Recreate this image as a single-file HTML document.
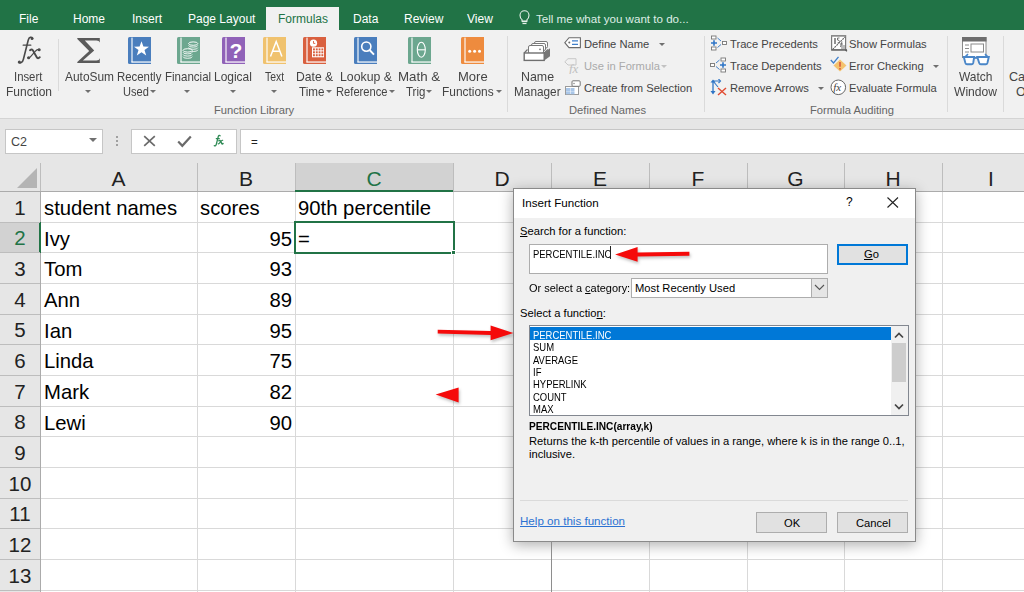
<!DOCTYPE html><html><head><meta charset="utf-8"><style>
*{margin:0;padding:0;box-sizing:border-box}
html,body{width:1024px;height:592px;overflow:hidden;background:#fff;font-family:"Liberation Sans",sans-serif}
div,span{position:absolute;white-space:nowrap}
.tab{top:11px;color:#fff;font-size:12px;line-height:16px}
.rl{color:#444;font-size:11.8px;line-height:15px;text-align:center}
.gl{color:#666;font-size:11.2px;line-height:14px}
.sl{color:#444;font-size:11.2px;line-height:14px}
.sep{width:1px;background:#dadada}
.ch{top:163px;height:28px;color:#222;font-size:21px;line-height:31px;text-align:center}
.vl{width:1px;background:#d9d9d9}
.hl{height:1px;background:#d9d9d9}
.rh{left:0;width:40px;color:#222;font-size:20.5px;text-align:center}
.cell{color:#000;font-size:20.3px;line-height:30px}
.dt{color:#000;font-size:11.2px;line-height:13px}
.li{left:533px;color:#000;font-size:11px;line-height:12px;transform-origin:0 0;transform:scaleX(0.86)}
</style></head><body>
<div style="left:0;top:0;width:1024px;height:30px;background:#217346"></div>
<div style="left:266px;top:7px;width:73px;height:23px;background:#f1f1f1"></div>
<div class="tab" style="left:19px">File</div>
<div class="tab" style="left:73px">Home</div>
<div class="tab" style="left:132px">Insert</div>
<div class="tab" style="left:188px">Page Layout</div>
<div class="tab" style="left:353px">Data</div>
<div class="tab" style="left:404px">Review</div>
<div class="tab" style="left:467px">View</div>
<div class="tab" style="left:278px;color:#217346">Formulas</div>
<div class="tab" style="left:536px;color:#dfeee5;font-size:11.6px">Tell me what you want to do...</div>
<div style="left:0;top:30px;width:1024px;height:89px;background:#f1f1f1;border-bottom:1px solid #d4d4d4"></div>
<div style="left:0;top:119px;width:1024px;height:73px;background:#e6e6e6"></div>
<div class="rl" style="left:13.84px;top:70px;font-size:12.6px;transform-origin:0 0;transform:scaleX(0.900)">Insert</div>
<div class="rl" style="left:64.50px;top:70px;font-size:12.6px;transform-origin:0 0;transform:scaleX(0.946)">AutoSum</div>
<div class="rl" style="left:116.53px;top:70px;font-size:12.6px;transform-origin:0 0;transform:scaleX(0.905)">Recently</div>
<div class="rl" style="left:164.52px;top:70px;font-size:12.6px;transform-origin:0 0;transform:scaleX(0.916)">Financial</div>
<div class="rl" style="left:214.49px;top:70px;font-size:12.6px;transform-origin:0 0;transform:scaleX(0.950)">Logical</div>
<div class="rl" style="left:265.00px;top:70px;font-size:12.6px;transform-origin:0 0;transform:scaleX(0.825)">Text</div>
<div class="rl" style="left:295.97px;top:70px;font-size:12.6px;transform-origin:0 0;transform:scaleX(0.964)">Date &amp;</div>
<div class="rl" style="left:339.96px;top:70px;font-size:12.6px;transform-origin:0 0;transform:scaleX(0.976)">Lookup &amp;</div>
<div class="rl" style="left:397.87px;top:70px;font-size:12.6px;transform-origin:0 0;transform:scaleX(1.057)">Math &amp;</div>
<div class="rl" style="left:457.90px;top:70px;font-size:12.6px;transform-origin:0 0;transform:scaleX(1.034)">More</div>
<div class="rl" style="left:521.45px;top:70px;font-size:12.6px;transform-origin:0 0;transform:scaleX(0.985)">Name</div>
<div class="rl" style="left:958.50px;top:70px;font-size:12.6px;transform-origin:0 0;transform:scaleX(0.951)">Watch</div>
<div class="rl" style="left:5.68px;top:85px;font-size:12.6px;transform-origin:0 0;transform:scaleX(0.952)">Function</div>
<div class="rl" style="left:122.86px;top:85px;font-size:12.6px;transform-origin:0 0;transform:scaleX(0.877)">Used</div>
<div class="rl" style="left:299.25px;top:85px;font-size:12.6px;transform-origin:0 0;transform:scaleX(0.927)">Time</div>
<div class="rl" style="left:336.30px;top:85px;font-size:12.6px;transform-origin:0 0;transform:scaleX(0.887)">Reference</div>
<div class="rl" style="left:406.00px;top:85px;font-size:12.6px;transform-origin:0 0;transform:scaleX(0.910)">Trig</div>
<div class="rl" style="left:442.49px;top:85px;font-size:12.6px;transform-origin:0 0;transform:scaleX(0.946)">Functions</div>
<div class="rl" style="left:513.50px;top:85px;font-size:12.6px;transform-origin:0 0;transform:scaleX(0.937)">Manager</div>
<div class="rl" style="left:954.00px;top:85px;font-size:12.6px;transform-origin:0 0;transform:scaleX(0.959)">Window</div>
<div class="rl" style="left:1009px;top:70px;font-size:12.6px">Ca</div><div class="rl" style="left:1016px;top:85px;font-size:12.6px">O</div>
<div class="gl" style="left:214px;top:103px">Function Library</div>
<div class="gl" style="left:569px;top:103px">Defined Names</div>
<div class="gl" style="left:810px;top:103px">Formula Auditing</div>
<div class="sl" style="left:584px;top:37px;color:#444">Define Name</div>
<div class="sl" style="left:584px;top:59px;color:#aaa">Use in Formula</div>
<div class="sl" style="left:584px;top:81px;color:#444">Create from Selection</div>
<div class="sl" style="left:730px;top:37px;color:#444">Trace Precedents</div>
<div class="sl" style="left:730px;top:59px;color:#444">Trace Dependents</div>
<div class="sl" style="left:730px;top:81px;color:#444">Remove Arrows</div>
<div class="sl" style="left:849px;top:37px;color:#444">Show Formulas</div>
<div class="sl" style="left:849px;top:59px;color:#444">Error Checking</div>
<div class="sl" style="left:849px;top:81px;color:#444">Evaluate Formula</div>
<div class="sep" style="left:58px;top:39px;height:52px"></div>
<div class="sep" style="left:507px;top:36px;height:76px"></div>
<div class="sep" style="left:704px;top:36px;height:76px"></div>
<div class="sep" style="left:947px;top:36px;height:76px"></div>
<div class="sep" style="left:1003px;top:36px;height:76px"></div>
<svg style="position:absolute;left:128px;top:37px" width="23" height="27" viewBox="0 0 23 27"><path d="M1.6,0 H23 V27 H1.6 Q0,27 0,25.4 V1.6 Q0,0 1.6,0 Z" fill="#4a7ebd"/><rect x="3.4" y="0.6" width="1.2" height="24.6" fill="#fff" opacity="0.92"/><rect x="3.4" y="24.4" width="19.6" height="1.3" fill="#fff" opacity="0.92"/><path d="M13.5,4.2 L15.4,9.6 L21,9.7 L16.5,13.1 L18.2,18.6 L13.5,15.3 L8.8,18.6 L10.5,13.1 L6,9.7 L11.6,9.6 Z" fill="#fff"/></svg>
<svg style="position:absolute;left:177px;top:37px" width="23" height="27" viewBox="0 0 23 27"><path d="M1.6,0 H23 V27 H1.6 Q0,27 0,25.4 V1.6 Q0,0 1.6,0 Z" fill="#6ca78f"/><rect x="3.4" y="0.6" width="1.2" height="24.6" fill="#fff" opacity="0.92"/><rect x="3.4" y="24.4" width="19.6" height="1.3" fill="#fff" opacity="0.92"/><path d="M11.6,8.4 a4.6,1.7 0 0 0 9.2,0" fill="none" stroke="#fff" stroke-width="0.95" opacity="0.9"/><path d="M11.6,10.6 a4.6,1.7 0 0 0 9.2,0" fill="none" stroke="#fff" stroke-width="0.95" opacity="0.9"/><path d="M11.6,12.8 a4.6,1.7 0 0 0 9.2,0" fill="none" stroke="#fff" stroke-width="0.95" opacity="0.9"/><path d="M6.0,15.2 a4.6,1.7 0 0 0 9.2,0" fill="none" stroke="#fff" stroke-width="0.95" opacity="0.9"/><path d="M6.0,17.4 a4.6,1.7 0 0 0 9.2,0" fill="none" stroke="#fff" stroke-width="0.95" opacity="0.9"/><path d="M6.0,19.6 a4.6,1.7 0 0 0 9.2,0" fill="none" stroke="#fff" stroke-width="0.95" opacity="0.9"/><ellipse cx="16.2" cy="6.6" rx="4.6" ry="1.7" fill="none" stroke="#fff" stroke-width="0.95"/><ellipse cx="10.6" cy="13.4" rx="4.6" ry="1.7" fill="#6ca78f" stroke="#fff" stroke-width="0.95"/></svg>
<svg style="position:absolute;left:222px;top:37px" width="23" height="27" viewBox="0 0 23 27"><path d="M1.6,0 H23 V27 H1.6 Q0,27 0,25.4 V1.6 Q0,0 1.6,0 Z" fill="#9062b8"/><rect x="3.4" y="0.6" width="1.2" height="24.6" fill="#fff" opacity="0.92"/><rect x="3.4" y="24.4" width="19.6" height="1.3" fill="#fff" opacity="0.92"/><text x="13.8" y="21" font-family="Liberation Sans" font-weight="bold" font-size="21" fill="#fff" text-anchor="middle">?</text></svg>
<svg style="position:absolute;left:263px;top:37px" width="23" height="27" viewBox="0 0 23 27"><path d="M1.6,0 H23 V27 H1.6 Q0,27 0,25.4 V1.6 Q0,0 1.6,0 Z" fill="#f0c26e"/><rect x="3.4" y="0.6" width="1.2" height="24.6" fill="#fff" opacity="0.92"/><rect x="3.4" y="24.4" width="19.6" height="1.3" fill="#fff" opacity="0.92"/><path d="M7.5,19.5 L13.2,4.5 L18.9,19.5 M9.6,14.2 H16.8" fill="none" stroke="#fff" stroke-width="1.5"/></svg>
<svg style="position:absolute;left:303px;top:37px" width="23" height="27" viewBox="0 0 23 27"><path d="M1.6,0 H23 V27 H1.6 Q0,27 0,25.4 V1.6 Q0,0 1.6,0 Z" fill="#d9603f"/><rect x="3.4" y="0.6" width="1.2" height="24.6" fill="#fff" opacity="0.92"/><rect x="3.4" y="24.4" width="19.6" height="1.3" fill="#fff" opacity="0.92"/><circle cx="10.5" cy="6.2" r="3.6" fill="#fff"/><path d="M10.5,4 V6.4 H12.3" stroke="#d9603f" stroke-width="0.9" fill="none"/><rect x="9" y="10.3" width="12" height="10" fill="#fff"/><rect x="10.0" y="11.4" width="1.9" height="2" fill="#d9603f"/><rect x="10.0" y="14.3" width="1.9" height="2" fill="#d9603f"/><rect x="10.0" y="17.2" width="1.9" height="2" fill="#d9603f"/><rect x="12.8" y="11.4" width="1.9" height="2" fill="#d9603f"/><rect x="12.8" y="14.3" width="1.9" height="2" fill="#d9603f"/><rect x="12.8" y="17.2" width="1.9" height="2" fill="#d9603f"/><rect x="15.6" y="11.4" width="1.9" height="2" fill="#d9603f"/><rect x="15.6" y="14.3" width="1.9" height="2" fill="#d9603f"/><rect x="15.6" y="17.2" width="1.9" height="2" fill="#d9603f"/><rect x="18.4" y="11.4" width="1.9" height="2" fill="#d9603f"/><rect x="18.4" y="14.3" width="1.9" height="2" fill="#d9603f"/><rect x="18.4" y="17.2" width="1.9" height="2" fill="#d9603f"/></svg>
<svg style="position:absolute;left:354px;top:37px" width="23" height="27" viewBox="0 0 23 27"><path d="M1.6,0 H23 V27 H1.6 Q0,27 0,25.4 V1.6 Q0,0 1.6,0 Z" fill="#4a7ebd"/><rect x="3.4" y="0.6" width="1.2" height="24.6" fill="#fff" opacity="0.92"/><rect x="3.4" y="24.4" width="19.6" height="1.3" fill="#fff" opacity="0.92"/><circle cx="12.3" cy="9.6" r="4.6" fill="none" stroke="#fff" stroke-width="1.6"/><path d="M15.6,13 L20,17.6" stroke="#fff" stroke-width="1.9"/></svg>
<svg style="position:absolute;left:408px;top:37px" width="23" height="27" viewBox="0 0 23 27"><path d="M1.6,0 H23 V27 H1.6 Q0,27 0,25.4 V1.6 Q0,0 1.6,0 Z" fill="#6ca78f"/><rect x="3.4" y="0.6" width="1.2" height="24.6" fill="#fff" opacity="0.92"/><rect x="3.4" y="24.4" width="19.6" height="1.3" fill="#fff" opacity="0.92"/><ellipse cx="13.3" cy="12.8" rx="4" ry="7.5" fill="none" stroke="#fff" stroke-width="1.1"/><path d="M9.4,12.8 H17.2" stroke="#fff" stroke-width="1.1"/></svg>
<svg style="position:absolute;left:461px;top:37px" width="23" height="27" viewBox="0 0 23 27"><path d="M1.6,0 H23 V27 H1.6 Q0,27 0,25.4 V1.6 Q0,0 1.6,0 Z" fill="#ee8b3e"/><rect x="3.4" y="0.6" width="1.2" height="24.6" fill="#fff" opacity="0.92"/><rect x="3.4" y="24.4" width="19.6" height="1.3" fill="#fff" opacity="0.92"/><circle cx="8.7" cy="14.2" r="1.5" fill="#fff"/><circle cx="13.6" cy="14.2" r="1.5" fill="#fff"/><circle cx="18.5" cy="14.2" r="1.5" fill="#fff"/></svg>
<svg style="position:absolute;left:15px;top:34px" width="30" height="34" viewBox="0 0 30 34"><g stroke="#4a4a4a" fill="none" stroke-linecap="round"><path d="M17.8,4.4 C16.5,2.6 14.2,2.8 13.2,6.2 L8.4,25.2 C7.6,28.3 5.6,29.6 3.6,28.3" stroke-width="1.6"/><path d="M8.2,11.2 H15.8" stroke-width="1.3"/><path d="M15,16.2 C16.8,14.8 17.8,15.6 18.6,17.6 L21.6,23 C22.4,24.6 23.6,24.6 24.8,23.2" stroke-width="1.9"/><path d="M24,15.4 C22.6,15 21.6,15.8 20.2,17.4 L15.6,22.6 C14.6,23.8 13.6,24.2 12.9,23.8" stroke-width="1.2"/></g><g fill="#4a4a4a"><circle cx="17" cy="4.7" r="1.4"/><circle cx="4.4" cy="27.9" r="1.5"/><circle cx="24.2" cy="15.8" r="1.5"/><circle cx="13.6" cy="23.7" r="1.5"/></g></svg>
<svg style="position:absolute;left:77px;top:38px" width="23" height="26" viewBox="0 0 23 26"><path d="M0.3,0 H22.8 V4.6 Q22.2,2.5 19.5,2.5 H7.8 L17.2,12.6 L5.9,22.5 H19.5 Q22.2,22.5 22.8,20.2 V25 H0.3 V24.1 L12.2,12.9 L0.3,0.9 Z" fill="#5a5a5a"/></svg>
<svg style="position:absolute;left:519px;top:10px" width="11" height="15" viewBox="0 0 11 15"><path d="M3,11.2 V9.6 Q1,8 1,5.2 A4.5,4.5 0 0 1 10,5.2 Q10,8 8,9.6 V11.2 Z" fill="none" stroke="#e6f0ea" stroke-width="1.1"/><rect x="3" y="10.6" width="5" height="1.6" fill="#e6f0ea"/><rect x="3.5" y="13" width="4" height="1.1" fill="#e6f0ea"/></svg>
<div style="left:85.0px;top:89.5px;width:0;height:0;border-left:3.0px solid transparent;border-right:3.0px solid transparent;border-top:3.0px solid #6f6f6f"></div>
<div style="left:150.0px;top:89.5px;width:0;height:0;border-left:3.0px solid transparent;border-right:3.0px solid transparent;border-top:3.0px solid #6f6f6f"></div>
<div style="left:184.0px;top:89.5px;width:0;height:0;border-left:3.0px solid transparent;border-right:3.0px solid transparent;border-top:3.0px solid #6f6f6f"></div>
<div style="left:230.0px;top:89.5px;width:0;height:0;border-left:3.0px solid transparent;border-right:3.0px solid transparent;border-top:3.0px solid #6f6f6f"></div>
<div style="left:271.0px;top:89.5px;width:0;height:0;border-left:3.0px solid transparent;border-right:3.0px solid transparent;border-top:3.0px solid #6f6f6f"></div>
<div style="left:325.5px;top:89.5px;width:0;height:0;border-left:3.0px solid transparent;border-right:3.0px solid transparent;border-top:3.0px solid #6f6f6f"></div>
<div style="left:388.8px;top:89.5px;width:0;height:0;border-left:3.0px solid transparent;border-right:3.0px solid transparent;border-top:3.0px solid #6f6f6f"></div>
<div style="left:426.3px;top:89.5px;width:0;height:0;border-left:3.0px solid transparent;border-right:3.0px solid transparent;border-top:3.0px solid #6f6f6f"></div>
<div style="left:495.5px;top:89.5px;width:0;height:0;border-left:3.0px solid transparent;border-right:3.0px solid transparent;border-top:3.0px solid #6f6f6f"></div>
<div style="left:658.5px;top:42.5px;width:0;height:0;border-left:3.0px solid transparent;border-right:3.0px solid transparent;border-top:3.0px solid #6f6f6f"></div>
<div style="left:661.0px;top:64.5px;width:0;height:0;border-left:3.0px solid transparent;border-right:3.0px solid transparent;border-top:3.0px solid #c2c2c2"></div>
<div style="left:817.5px;top:86.5px;width:0;height:0;border-left:3.0px solid transparent;border-right:3.0px solid transparent;border-top:3.0px solid #6f6f6f"></div>
<div style="left:933.0px;top:64.5px;width:0;height:0;border-left:3.0px solid transparent;border-right:3.0px solid transparent;border-top:3.0px solid #6f6f6f"></div>
<svg style="position:absolute;left:523px;top:40px" width="29" height="23" viewBox="0 0 29 23"><rect x="11.5" y="1.5" width="13" height="6.5" rx="1.5" fill="#fff" stroke="#7a7a7a" stroke-width="1"/><rect x="8.5" y="3.5" width="14" height="7" rx="1.5" fill="#fff" stroke="#7a7a7a" stroke-width="1"/><rect x="5.5" y="5.5" width="15" height="8" rx="1.5" fill="#fff" stroke="#7a7a7a" stroke-width="1"/><circle cx="17" cy="9.3" r="0.9" fill="#7a7a7a"/><path d="M1.2,13 L4.5,9.5 M21.2,13 L25,9.5" fill="none" stroke="#6f6f6f" stroke-width="1.1"/><path d="M21.2,13 L27,8.2 V16.3 L21.2,20.6 Z" fill="#767676"/><rect x="1.2" y="13" width="20" height="7.4" fill="#fff" stroke="#6f6f6f" stroke-width="1.4"/></svg>
<svg style="position:absolute;left:564px;top:37px" width="18" height="12" viewBox="0 0 18 12"><path d="M5,0.7 H16.4 V10.6 H5 L0.8,5.65 Z" fill="#fff" stroke="#6b6b6b" stroke-width="1.1"/><circle cx="5.3" cy="5.6" r="1" fill="#6b6b6b"/><path d="M8,3.8 H14 M8,7.4 H14" stroke="#3f7fca" stroke-width="1.2"/></svg>
<svg style="position:absolute;left:564px;top:58px" width="18" height="16" viewBox="0 0 18 16"><path d="M4,0.7 H12 V7 H4 L0.8,3.8 Z" fill="none" stroke="#c8c8c8" stroke-width="1"/><text x="5" y="14.5" font-family="Liberation Serif" font-style="italic" font-size="13" fill="#c0c0c0">fx</text></svg>
<svg style="position:absolute;left:565px;top:80px" width="16" height="15" viewBox="0 0 16 15"><rect x="0.5" y="6.5" width="13" height="8" fill="#fff" stroke="#9a9a9a" stroke-width="1"/><rect x="1" y="8" width="4" height="3" fill="#a9c6e8"/><rect x="5.5" y="8" width="4" height="3" fill="#a9c6e8"/><rect x="1" y="11.3" width="4" height="3" fill="#a9c6e8"/><rect x="5.5" y="11.3" width="4" height="3" fill="#a9c6e8"/><rect x="7" y="0.8" width="8.2" height="5.5" rx="1" fill="#fff" stroke="#777" stroke-width="1"/><circle cx="9" cy="3.5" r="0.7" fill="#777"/></svg>
<svg style="position:absolute;left:710px;top:35px" width="18" height="16" viewBox="0 0 18 16"><rect x="1.5" y="1" width="4.5" height="3" fill="#fff" stroke="#777" stroke-width="0.9"/><rect x="1.5" y="12" width="4.5" height="3" fill="#fff" stroke="#777" stroke-width="0.9"/><rect x="12.5" y="6.5" width="4" height="3" fill="#fff" stroke="#777" stroke-width="0.9"/><path d="M1,8 H7 M4,5.3 V10.7" stroke="#2f75c6" stroke-width="1.6"/><path d="M7.5,3 L11,6 M7.5,12.5 L11,9.5" stroke="#2f75c6" stroke-width="0.9"/></svg>
<svg style="position:absolute;left:710px;top:57px" width="18" height="16" viewBox="0 0 18 16"><rect x="0.5" y="6.5" width="4" height="3" fill="#fff" stroke="#777" stroke-width="0.9"/><rect x="11" y="1" width="4.5" height="3" fill="#fff" stroke="#777" stroke-width="0.9"/><rect x="11" y="12" width="4.5" height="3" fill="#fff" stroke="#777" stroke-width="0.9"/><path d="M10,8 H16 M13,5.3 V10.7" stroke="#2f75c6" stroke-width="1.6"/><path d="M6,6 L9.5,3 M6,9.5 L9.5,12.5" stroke="#2f75c6" stroke-width="0.9"/></svg>
<svg style="position:absolute;left:710px;top:79px" width="18" height="17" viewBox="0 0 18 17"><path d="M3,2 V14" stroke="#2f75c6" stroke-width="1.3"/><path d="M0.5,12 L3,15.5 L5.5,12 Z M0.5,3.5 L3,0.5 L5.5,3.5 Z" fill="#2f75c6"/><path d="M3,2 H9.5 M3,2 L8,8" stroke="#2f75c6" stroke-width="1.1"/><path d="M8.5,0 L10.5,2 L8.5,4" fill="none" stroke="#2f75c6" stroke-width="1.1"/><path d="M8,9 L16,16 M16,9 L8,16" stroke="#e04a30" stroke-width="1.4"/></svg>
<svg style="position:absolute;left:830px;top:34px" width="18" height="18" viewBox="0 0 18 18"><rect x="1.6" y="1.6" width="14" height="14.4" fill="#fff" stroke="#7a7a7a" stroke-width="1.2"/><rect x="1" y="1" width="15" height="1.6" fill="#8a8a8a"/><path d="M2.5,15.6 L15,3" stroke="#666" stroke-width="1.1" stroke-dasharray="2,0.8"/><path d="M5,4 V10" stroke="#555" stroke-width="1.3"/><path d="M9.5,4 H7.5 V6 Q9.5,6 9.5,7.5 Q9.5,9 7.5,9" fill="none" stroke="#666" stroke-width="0.9"/><path d="M12,7.5 L10.5,13 M10,10 H13 M11,14 H15 M11,12 H15" stroke="#666" stroke-width="0.9"/><rect x="1.5" y="15.2" width="15.5" height="1.3" fill="#666"/><path d="M15.5,16 L17,17.3" stroke="#555" stroke-width="1.2"/></svg>
<svg style="position:absolute;left:830px;top:56px" width="18" height="16" viewBox="0 0 18 16"><path d="M0.8,4 L3.5,7 L8.5,0.8" fill="none" stroke="#3f7fca" stroke-width="1.3"/><path d="M10,3.5 L16.5,9.5 L10,15.5 L3.5,9.5 Z" fill="#f4c36f"/><path d="M10,6 V10.8" stroke="#d9503a" stroke-width="1.5"/><circle cx="10" cy="12.8" r="0.9" fill="#d9503a"/></svg>
<svg style="position:absolute;left:830px;top:79px" width="17" height="17" viewBox="0 0 17 17"><circle cx="8.3" cy="8.3" r="7.3" fill="#fff" stroke="#666" stroke-width="1"/><text x="3.2" y="12.3" font-family="Liberation Serif" font-style="italic" font-size="11" fill="#444">fx</text></svg>
<svg style="position:absolute;left:961px;top:37px" width="31" height="29" viewBox="0 0 31 29"><rect x="1.5" y="0.5" width="23.5" height="20" fill="#fff" stroke="#8a8a8a" stroke-width="1"/><rect x="1" y="0" width="24.5" height="4.5" fill="#6d6d6d"/><path d="M4,8 H8 M4,11.5 H8 M4,15 H8" stroke="#8a8a8a" stroke-width="1"/><rect x="10" y="7" width="12.5" height="8" fill="#fff" stroke="#8a8a8a" stroke-width="1"/><path d="M3.5,20.5 L7,17.2 M27.5,20.5 L24,17.2" stroke="#4a86c8" stroke-width="1.6" fill="none"/><path d="M2.8,20 H13.2 L12.2,26 Q11.8,27.3 10.6,27.3 H6 Q4.8,27.3 4.4,26 Z M16.3,20 H27.8 L26.4,26 Q26,27.3 24.8,27.3 H19.8 Q18.6,27.3 18.2,26 Z" fill="#fff" stroke="#4a86c8" stroke-width="1.9"/><path d="M13,21 H16.5" stroke="#4a86c8" stroke-width="1.6"/></svg>
<div style="left:5px;top:129px;width:98px;height:25px;background:#fff;border:1px solid #c6c6c6"></div>
<div style="left:11px;top:134px;font-size:12.5px;line-height:16px;color:#444">C2</div>
<div style="left:131px;top:129px;width:106px;height:25px;background:#fff;border:1px solid #c6c6c6"></div>
<div style="left:240px;top:129px;width:790px;height:25px;background:#fff;border:1px solid #c6c6c6"></div>
<div style="left:251px;top:136px;font-size:11.5px;color:#222">=</div>
<div style="left:88.8px;top:138.3px;width:0;height:0;border-left:4.0px solid transparent;border-right:4.0px solid transparent;border-top:4.0px solid #707070"></div>
<div style="left:116px;top:136px;width:2px;height:2px;background:#a0a0a0"></div>
<div style="left:116px;top:140px;width:2px;height:2px;background:#a0a0a0"></div>
<div style="left:116px;top:144px;width:2px;height:2px;background:#a0a0a0"></div>
<svg style="position:absolute;left:143px;top:135px" width="13" height="12" viewBox="0 0 13 12"><path d="M1.2,1.2 L11.8,10.8 M11.8,1.2 L1.2,10.8" stroke="#6a6a6a" stroke-width="1.7"/></svg>
<svg style="position:absolute;left:177px;top:135px" width="15" height="13" viewBox="0 0 15 13"><path d="M1.2,6.5 L5.3,10.8 L13.8,1.5" fill="none" stroke="#6a6a6a" stroke-width="2.2"/></svg>
<svg style="position:absolute;left:211px;top:134px" width="16" height="14" viewBox="0 0 30 34"><g stroke="#2f8a55" fill="none" stroke-linecap="round"><path d="M17.8,4.4 C16.5,2.6 14.2,2.8 13.2,6.2 L8.4,25.2 C7.6,28.3 5.6,29.6 3.6,28.3" stroke-width="3.2"/><path d="M8.2,11.2 H15.8" stroke-width="2.6"/><path d="M15,16.2 C16.8,14.8 17.8,15.6 18.6,17.6 L21.6,23 C22.4,24.6 23.6,24.6 24.8,23.2" stroke-width="3.6"/><path d="M24,15.4 C22.6,15 21.6,15.8 20.2,17.4 L15.6,22.6 C14.6,23.8 13.6,24.2 12.9,23.8" stroke-width="2.6"/></g></svg>
<div style="left:295px;top:163px;width:158px;height:28px;background:#d2d2d2"></div>
<div class="ch" style="left:40px;width:157px;color:#222">A</div>
<div style="left:40px;top:163px;width:1px;height:28px;background:#bdbdbd"></div>
<div class="ch" style="left:197px;width:98px;color:#222">B</div>
<div style="left:197px;top:163px;width:1px;height:28px;background:#bdbdbd"></div>
<div class="ch" style="left:295px;width:158px;color:#217346">C</div>
<div style="left:295px;top:163px;width:1px;height:28px;background:#bdbdbd"></div>
<div class="ch" style="left:453px;width:98px;color:#222">D</div>
<div style="left:453px;top:163px;width:1px;height:28px;background:#bdbdbd"></div>
<div class="ch" style="left:551px;width:98px;color:#222">E</div>
<div style="left:551px;top:163px;width:1px;height:28px;background:#bdbdbd"></div>
<div class="ch" style="left:649px;width:98px;color:#222">F</div>
<div style="left:649px;top:163px;width:1px;height:28px;background:#bdbdbd"></div>
<div class="ch" style="left:747px;width:97px;color:#222">G</div>
<div style="left:747px;top:163px;width:1px;height:28px;background:#bdbdbd"></div>
<div class="ch" style="left:844px;width:98px;color:#222">H</div>
<div style="left:844px;top:163px;width:1px;height:28px;background:#bdbdbd"></div>
<div class="ch" style="left:942px;width:98px;color:#222">I</div>
<div style="left:942px;top:163px;width:1px;height:28px;background:#bdbdbd"></div>
<div style="left:0;top:191px;width:1024px;height:1px;background:#ababab"></div>
<div style="left:295px;top:190px;width:158px;height:2px;background:#217346"></div>
<div class="vl" style="left:197px;top:192px;height:400px"></div>
<div class="vl" style="left:295px;top:192px;height:400px"></div>
<div class="vl" style="left:453px;top:192px;height:400px"></div>
<div class="vl" style="left:551px;top:192px;height:400px"></div>
<div class="vl" style="left:649px;top:192px;height:400px"></div>
<div class="vl" style="left:747px;top:192px;height:400px"></div>
<div class="vl" style="left:844px;top:192px;height:400px"></div>
<div class="vl" style="left:942px;top:192px;height:400px"></div>
<div class="hl" style="left:40px;top:222px;width:984px"></div>
<div class="hl" style="left:40px;top:252px;width:984px"></div>
<div class="hl" style="left:40px;top:283px;width:984px"></div>
<div class="hl" style="left:40px;top:314px;width:984px"></div>
<div class="hl" style="left:40px;top:344px;width:984px"></div>
<div class="hl" style="left:40px;top:375px;width:984px"></div>
<div class="hl" style="left:40px;top:406px;width:984px"></div>
<div class="hl" style="left:40px;top:436px;width:984px"></div>
<div class="hl" style="left:40px;top:467px;width:984px"></div>
<div class="hl" style="left:40px;top:498px;width:984px"></div>
<div class="hl" style="left:40px;top:528px;width:984px"></div>
<div class="hl" style="left:40px;top:559px;width:984px"></div>
<div class="hl" style="left:40px;top:590px;width:984px"></div>
<div style="left:0;top:192px;width:41px;height:400px;background:#e6e6e6;border-right:1px solid #ababab"></div>
<div style="left:0;top:223px;width:39px;height:29px;background:#d2d2d2"></div>
<div style="left:39px;top:222px;width:2px;height:31px;background:#217346"></div>
<div class="rh" style="top:192px;height:31px;line-height:31px;color:#222">1</div>
<div style="left:0;top:222px;width:40px;height:1px;background:#bdbdbd"></div>
<div class="rh" style="top:223px;height:30px;line-height:30px;color:#217346">2</div>
<div style="left:0;top:252px;width:40px;height:1px;background:#bdbdbd"></div>
<div class="rh" style="top:253px;height:31px;line-height:31px;color:#222">3</div>
<div style="left:0;top:283px;width:40px;height:1px;background:#bdbdbd"></div>
<div class="rh" style="top:284px;height:31px;line-height:31px;color:#222">4</div>
<div style="left:0;top:314px;width:40px;height:1px;background:#bdbdbd"></div>
<div class="rh" style="top:315px;height:30px;line-height:30px;color:#222">5</div>
<div style="left:0;top:344px;width:40px;height:1px;background:#bdbdbd"></div>
<div class="rh" style="top:345px;height:31px;line-height:31px;color:#222">6</div>
<div style="left:0;top:375px;width:40px;height:1px;background:#bdbdbd"></div>
<div class="rh" style="top:376px;height:31px;line-height:31px;color:#222">7</div>
<div style="left:0;top:406px;width:40px;height:1px;background:#bdbdbd"></div>
<div class="rh" style="top:407px;height:30px;line-height:30px;color:#222">8</div>
<div style="left:0;top:436px;width:40px;height:1px;background:#bdbdbd"></div>
<div class="rh" style="top:437px;height:31px;line-height:31px;color:#222">9</div>
<div style="left:0;top:467px;width:40px;height:1px;background:#bdbdbd"></div>
<div class="rh" style="top:468px;height:31px;line-height:31px;color:#222">10</div>
<div style="left:0;top:498px;width:40px;height:1px;background:#bdbdbd"></div>
<div class="rh" style="top:499px;height:30px;line-height:30px;color:#222">11</div>
<div style="left:0;top:528px;width:40px;height:1px;background:#bdbdbd"></div>
<div class="rh" style="top:529px;height:31px;line-height:31px;color:#222">12</div>
<div style="left:0;top:559px;width:40px;height:1px;background:#bdbdbd"></div>
<div class="rh" style="top:560px;height:31px;line-height:31px;color:#222">13</div>
<div style="left:0;top:590px;width:40px;height:1px;background:#bdbdbd"></div>
<div style="left:17px;top:168px;width:0;height:0;border-left:20px solid transparent;border-bottom:20px solid #b4b4b4"></div>
<div class="cell" style="left:44px;top:193px">student names</div>
<div class="cell" style="left:200px;top:193px">scores</div>
<div class="cell" style="left:298px;top:193px">90th percentile</div>
<div class="cell" style="left:44px;top:224px">Ivy</div>
<div class="cell" style="left:197px;width:95px;text-align:right;top:224px">95</div>
<div class="cell" style="left:44px;top:254px">Tom</div>
<div class="cell" style="left:197px;width:95px;text-align:right;top:254px">93</div>
<div class="cell" style="left:44px;top:285px">Ann</div>
<div class="cell" style="left:197px;width:95px;text-align:right;top:285px">89</div>
<div class="cell" style="left:44px;top:316px">Ian</div>
<div class="cell" style="left:197px;width:95px;text-align:right;top:316px">95</div>
<div class="cell" style="left:44px;top:346px">Linda</div>
<div class="cell" style="left:197px;width:95px;text-align:right;top:346px">75</div>
<div class="cell" style="left:44px;top:377px">Mark</div>
<div class="cell" style="left:197px;width:95px;text-align:right;top:377px">82</div>
<div class="cell" style="left:44px;top:408px">Lewi</div>
<div class="cell" style="left:197px;width:95px;text-align:right;top:408px">90</div>
<div class="cell" style="left:298px;top:224px">=</div>
<div style="left:294px;top:221px;width:161px;height:33px;border:2px solid #217346"></div>
<div style="left:451px;top:250px;width:5px;height:5px;background:#217346;border:1px solid #fff"></div>
<div style="left:513px;top:188px;width:403px;height:354px;background:#f0f0f0;border:1px solid #8a8a8a;box-shadow:0 3px 13px rgba(0,0,0,.32)"></div>
<div style="left:514px;top:189px;width:401px;height:29px;background:#fff"></div>
<div class="dt" style="left:522px;top:196px;font-size:11.6px">Insert Function</div>
<div class="dt" style="left:846px;top:196px;font-size:12px">?</div>
<svg style="position:absolute;left:887px;top:197px" width="12" height="11" viewBox="0 0 12 11"><path d="M0.5,0.5 L11,10.5 M11,0.5 L0.5,10.5" stroke="#222" stroke-width="1.1"/></svg>
<div class="dt" style="left:520px;top:225px"><u>S</u>earch for a function:</div>
<div style="left:529px;top:244px;width:299px;height:30px;background:#fff;border:1px solid #adadad"></div>
<div class="li" style="top:248px;left:533px">PERCENTILE.INC</div>
<div style="left:837px;top:244px;width:71px;height:21px;background:#e1e1e1;border:2px solid #0078d7"></div>
<div class="dt" style="left:864px;top:248px"><u>G</u>o</div>
<div class="dt" style="left:529px;top:282px;transform-origin:0 0;transform:scaleX(0.98)">Or select a <u>c</u>ategory:</div>
<div style="left:631px;top:278px;width:197px;height:20px;background:#fff;border:1px solid #adadad"></div>
<div style="left:811px;top:279px;width:16px;height:18px;background:#e5e5e5;border-left:1px solid #adadad"></div>
<div class="dt" style="left:635px;top:282px">Most Recently Used</div>
<svg style="position:absolute;left:814px;top:284px" width="11" height="7" viewBox="0 0 11 7"><path d="M1,1 L5.5,5.5 L10,1" fill="none" stroke="#555" stroke-width="1.1"/></svg>
<div class="dt" style="left:520px;top:307px">Select a functio<u>n</u>:</div>
<div style="left:529px;top:325px;width:380px;height:91px;background:#fff;border:1px solid #828790"></div>
<div style="left:530px;top:327px;width:361px;height:13px;background:#0078d7"></div>
<div style="left:891px;top:326px;width:17px;height:89px;background:#f0f0f0"></div>
<div style="left:892px;top:343px;width:14px;height:39px;background:#cdcdcd"></div>
<svg style="position:absolute;left:894px;top:332px" width="10" height="7" viewBox="0 0 10 7"><path d="M1,5.5 L5,1.5 L9,5.5" fill="none" stroke="#444" stroke-width="1.7"/></svg>
<svg style="position:absolute;left:894px;top:403px" width="10" height="7" viewBox="0 0 10 7"><path d="M1,1.5 L5,5.5 L9,1.5" fill="none" stroke="#444" stroke-width="1.7"/></svg>
<div class="li" style="top:328.8px;color:#fff">PERCENTILE.INC</div>
<div class="li" style="top:341.2px;color:#000">SUM</div>
<div class="li" style="top:353.6px;color:#000">AVERAGE</div>
<div class="li" style="top:366.0px;color:#000">IF</div>
<div class="li" style="top:378.4px;color:#000">HYPERLINK</div>
<div class="li" style="top:390.8px;color:#000">COUNT</div>
<div class="li" style="top:403.2px;color:#000">MAX</div>
<div class="dt" style="left:529px;top:420px;font-weight:bold;transform-origin:0 0;transform:scaleX(0.905)">PERCENTILE.INC(array,k)</div>
<div class="dt" style="left:529px;top:435px">Returns the k-th percentile of values in a range, where k is in the range 0..1,</div>
<div class="dt" style="left:529px;top:448px">inclusive.</div>
<div style="left:520px;top:500px;width:388px;height:1px;background:#dadada"></div>
<div class="dt" style="left:520px;top:514px;color:#2c72d2;text-decoration:underline;font-size:11.6px">Help on this function</div>
<div style="left:756px;top:512px;width:71px;height:21px;background:#e1e1e1;border:1px solid #adadad"></div>
<div class="dt" style="left:784px;top:517px">OK</div>
<div style="left:837px;top:512px;width:71px;height:21px;background:#e1e1e1;border:1px solid #adadad"></div>
<div class="dt" style="left:856px;top:517px">Cancel</div>
<div style="left:551px;top:541px;width:1px;height:51px;background:#8e8e8e"></div>
<div style="left:610px;top:246px;width:1px;height:13px;background:#222"></div>
<svg style="position:absolute;left:600px;top:240px" width="100" height="30" viewBox="0 0 100 30"><path d="M15.1,14.5 L37.6,7 V12.5 L89.4,11.8 V15.8 L37.6,16.6 V21.7 Z" fill="#f50a0a" style="filter:drop-shadow(1px 2px 1.5px rgba(0,0,0,.25))"/></svg>
<svg style="position:absolute;left:430px;top:315px" width="90" height="40" viewBox="0 0 90 40"><path d="M7.7,14.8 L60.6,16 V10.4 L83.4,18.1 L60.6,25.3 V20 L7.7,18.5 Z" fill="#f50a0a" style="filter:drop-shadow(1px 2px 1.5px rgba(0,0,0,.25))"/></svg>
<svg style="position:absolute;left:430px;top:380px" width="35" height="30" viewBox="0 0 35 30"><path d="M5.6,14.4 L28.6,7.5 V22.4 Z" fill="#f50a0a" style="filter:drop-shadow(1px 2px 1.5px rgba(0,0,0,.25))"/></svg>
</body></html>
